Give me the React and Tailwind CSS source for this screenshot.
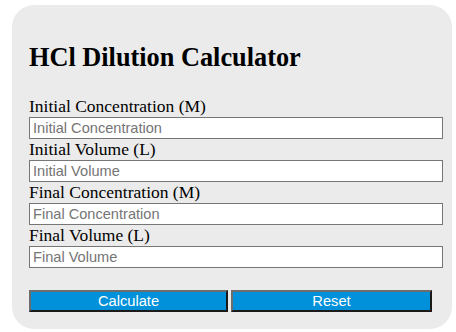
import { useState } from 'react';

const fields = [
  { label: 'Initial Concentration (M)', placeholder: 'Initial Concentration' },
  { label: 'Initial Volume (L)', placeholder: 'Initial Volume' },
  { label: 'Final Concentration (M)', placeholder: 'Final Concentration' },
  { label: 'Final Volume (L)', placeholder: 'Final Volume' },
];

const App = () => {
  const [values, setValues] = useState({});

  return (
    <div className="w-[456px] h-[332px] bg-white pt-[5px] pl-[12px]">
      <div className="w-[440px] h-[324px] bg-[#ebebeb] rounded-[22px] px-[17px] pt-[38px] font-['Liberation_Serif',serif] text-black">
        <h1 className="text-[26.3px] font-bold leading-[30px] mb-[23px]">HCl Dilution Calculator</h1>

        {fields.map((field, i) => (
          <div key={i}>
            <label className="block text-[17.5px] leading-[21px]">{field.label}</label>
            <input
              type="text"
              placeholder={field.placeholder}
              value={values[i] || ''}
              onChange={(e) => setValues((prev) => ({ ...prev, [i]: e.target.value }))}
              className="block w-[414px] h-[22px] bg-white border border-[#767676] px-[3px] font-['Liberation_Sans',sans-serif] text-[14.6px] placeholder:text-[#757575] outline-none"
            />
          </div>
        ))}

        <div className="flex gap-[3px] mt-[22px]">
          <button className="w-[199px] h-[22px] bg-[#0091da] border-2 border-t-[#6d6d6d] border-l-[#6d6d6d] border-r-[#1a1a1a] border-b-[#1a1a1a] text-white font-['Liberation_Sans',sans-serif] text-[14.7px] leading-none">
            Calculate
          </button>
          <button className="w-[201px] h-[22px] bg-[#0091da] border-2 border-t-[#6d6d6d] border-l-[#6d6d6d] border-r-[#1a1a1a] border-b-[#1a1a1a] text-white font-['Liberation_Sans',sans-serif] text-[14.7px] leading-none">
            Reset
          </button>
        </div>
      </div>
    </div>
  );
};

export default App;
